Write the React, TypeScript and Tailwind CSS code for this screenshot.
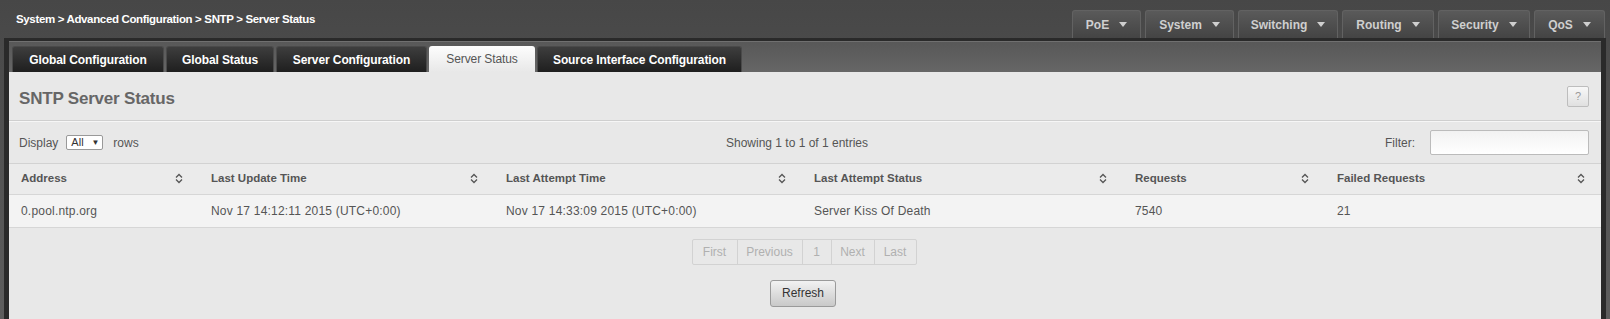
import React from 'react'

const navItems = [
  { label: 'PoE', w: 'w-[69px]' },
  { label: 'System', w: 'w-[89px]' },
  { label: 'Switching', w: 'w-[100px]' },
  { label: 'Routing', w: 'w-[92px]' },
  { label: 'Security', w: 'w-[92px]' },
  { label: 'QoS', w: 'w-[71px]' },
]

const tabs = [
  { label: 'Global Configuration', w: 'w-[152px]' },
  { label: 'Global Status', w: 'w-[108px]' },
  { label: 'Server Configuration', w: 'w-[151px]' },
  { label: 'Server Status', w: 'w-[106px]', active: true },
  { label: 'Source Interface Configuration', w: 'w-[205px]' },
]

const columns = [
  { label: 'Address', w: 'w-[190px]' },
  { label: 'Last Update Time', w: 'w-[295px]' },
  { label: 'Last Attempt Time', w: 'w-[308px]' },
  { label: 'Last Attempt Status', w: 'w-[321px]' },
  { label: 'Requests', w: 'w-[202px]' },
  { label: 'Failed Requests', w: 'w-[276px]' },
]

const rows = [
  ['0.pool.ntp.org', 'Nov 17 14:12:11 2015 (UTC+0:00)', 'Nov 17 14:33:09 2015 (UTC+0:00)', 'Server Kiss Of Death', '7540', '21'],
]

const pages = [
  { label: 'First', w: 'w-[44px]' },
  { label: 'Previous', w: 'w-[65px]' },
  { label: '1', w: 'w-[29px]' },
  { label: 'Next', w: 'w-[43px]' },
  { label: 'Last', w: 'w-[42px]' },
]

function Caret() {
  return (
    <svg width="8" height="5" viewBox="0 0 8 5" className="shrink-0">
      <path d="M0 0 L8 0 L4 5 Z" fill="#cfcfcf" />
    </svg>
  )
}

function SortIcon() {
  return (
    <svg width="8" height="11" viewBox="0 0 8 11" className="shrink-0">
      <path d="M1 4.5 L4 1.5 L7 4.5" fill="none" stroke="#555" strokeWidth="1.3" />
      <path d="M1 6.5 L4 9.5 L7 6.5" fill="none" stroke="#555" strokeWidth="1.3" />
    </svg>
  )
}

export default function App() {
  return (
    <div className="w-[1610px] h-[319px] overflow-hidden bg-gradient-to-b from-[#474747] to-[#5e5e5e] font-['Liberation_Sans',Arial,sans-serif]">
      {/* top bar */}
      <div className="flex h-[38px] justify-between">
        <div className="pl-[16px] pt-[11px] text-[11.5px] font-bold text-white tracking-[-0.35px]">
          System &gt; Advanced Configuration &gt; SNTP &gt; Server Status
        </div>
        <div className="flex gap-[4px] pt-[10px] pr-[5px]">
          {navItems.map((item) => (
            <div
              key={item.label}
              className={`${item.w} h-[28px] flex items-center justify-center gap-[10px] rounded-t-[3px] border border-b-0 border-[#626262] bg-gradient-to-b from-[#5a5a5a] to-[#444] text-[12px] font-bold text-[#cfcfcf]`}
            >
              <span>{item.label}</span>
              <Caret />
            </div>
          ))}
        </div>
      </div>

      {/* frame */}
      <div className="mx-[4px] bg-[#2a2a2a] px-[5px] pt-[3px] h-[281px]">
        <div className="border-t border-[#707070] bg-gradient-to-b from-[#585858] to-[#666] pt-[4px] px-[3px]">
          <div className="flex gap-[2px] h-[26px]">
            {tabs.map((t) =>
              t.active ? (
                <div
                  key={t.label}
                  className={`${t.w} flex items-center justify-center rounded-t-[3px] bg-gradient-to-b from-[#fdfdfd] to-[#e8e8e8] text-[12px] text-[#555] tracking-[-0.1px]`}
                >
                  {t.label}
                </div>
              ) : (
                <div
                  key={t.label}
                  className={`${t.w} flex items-center justify-center rounded-t-[3px] border border-b-0 border-[#4a4a4a] bg-gradient-to-b from-[#3e3e3e] to-[#1f1f1f] text-[12px] font-bold text-white tracking-[-0.1px]`}
                >
                  {t.label}
                </div>
              )
            )}
          </div>
        </div>

        {/* content */}
        <div className="bg-[#e8e8e8] h-[247px] text-[#555]">
          <div className="flex h-[49px] items-center justify-between pl-[10px] pr-[12px] border-b border-[#cfcfcf]">
            <div className="mt-[5px] text-[17px] font-bold text-[#666] tracking-[-0.2px]">SNTP Server Status</div>
            <div className="w-[22px] h-[21px] flex items-center justify-center rounded-[2px] border border-[#bdbdbd] bg-gradient-to-b from-[#f8f8f8] to-[#e0e0e0] text-[11px] text-[#999]">
              ?
            </div>
          </div>

          <div className="flex h-[43px] items-center border-t border-[#f6f6f6] border-b border-b-[#d2d2d2] text-[12px]">
            <div className="w-[200px] flex items-center pl-[10px]">
              <span>Display</span>
              <div className="ml-[8px] w-[37px] h-[15px] flex items-center justify-between pl-[4px] pr-[3px] rounded-[2px] border border-[#999] bg-white text-[11px] text-[#333]">
                <span>All</span>
                <span className="text-[8px]">▼</span>
              </div>
              <span className="ml-[10px]">rows</span>
            </div>
            <div className="flex-1 text-center">Showing 1 to 1 of 1 entries</div>
            <div className="w-[216px] flex items-center justify-end pr-[12px]">
              <span>Filter:</span>
              <div className="ml-[15px] w-[163px] h-[25px] rounded-[2px] border border-[#bbb] bg-gradient-to-b from-[#f2f2f2] to-white" />
            </div>
          </div>

          <table className="border-collapse text-[12px]">
            <thead>
              <tr className="h-[30px] bg-[#ebebeb] border-b border-[#d6d6d6]">
                {columns.map((c) => (
                  <th key={c.label} className={`${c.w} p-0 text-left font-bold text-[11.5px] text-[#555]`}>
                    <div className="flex items-center justify-between pl-[12px] pr-[16px]">
                      <span>{c.label}</span>
                      <SortIcon />
                    </div>
                  </th>
                ))}
              </tr>
            </thead>
            <tbody>
              {rows.map((r, i) => (
                <tr key={i} className="h-[33px] bg-[#f3f3f3] border-b border-[#d6d6d6]">
                  {r.map((cell, j) => (
                    <td key={j} className="pl-[12px] text-[#555] tracking-[0.2px]">
                      {cell}
                    </td>
                  ))}
                </tr>
              ))}
            </tbody>
          </table>

          <div className="flex justify-center pt-[11px] pr-[2px]">
            <div className="flex h-[26px] rounded-[2px] border border-[#d2d2d2]">
              {pages.map((p, i) => (
                <div
                  key={p.label}
                  className={`${p.w} flex items-center justify-center text-[12px] text-[#b0b0b0] ${i > 0 ? 'border-l border-[#d2d2d2]' : ''}`}
                >
                  {p.label}
                </div>
              ))}
            </div>
          </div>

          <div className="flex justify-center pt-[15px] pr-[4px]">
            <div className="w-[66px] h-[27px] flex items-center justify-center rounded-[3px] border border-[#9a9a9a] bg-gradient-to-b from-[#f2f2f2] to-[#c9c9c9] text-[12px] text-[#333]">
              Refresh
            </div>
          </div>
        </div>
      </div>
    </div>
  )
}
